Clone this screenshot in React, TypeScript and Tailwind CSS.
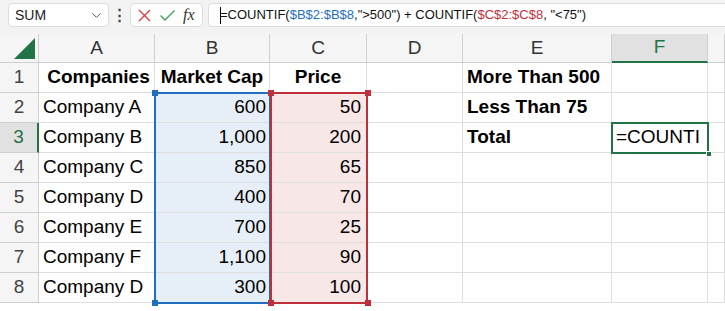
import { ChevronDown } from 'lucide-react';

const cols = ['A', 'B', 'C', 'D', 'E', 'F', ''];

type Row = { a: string; b: string; c: string; e: string; f?: string; bold?: boolean };

const rows: Row[] = [
  { a: 'Companies', b: 'Market Cap', c: 'Price', e: 'More Than 500', bold: true },
  { a: 'Company A', b: '600', c: '50', e: 'Less Than 75' },
  { a: 'Company B', b: '1,000', c: '200', e: 'Total', f: '=COUNTI' },
  { a: 'Company C', b: '850', c: '65', e: '' },
  { a: 'Company D', b: '400', c: '70', e: '' },
  { a: 'Company E', b: '700', c: '25', e: '' },
  { a: 'Company F', b: '1,100', c: '90', e: '' },
  { a: 'Company D', b: '300', c: '100', e: '' },
];

function FormulaBar() {
  return (
    <div className="flex h-[34px] items-start bg-[#f3f3f3] pt-[3px] pl-[8px]">
      <div className="flex h-[24px] w-[101px] items-center justify-between rounded-[4px] border border-[#dcdcdc] bg-white pl-[6px] pr-[4px] text-[14px] text-[#222]">
        <span>SUM</span>
        <ChevronDown size={15} strokeWidth={1.6} className="text-[#555]" />
      </div>
      <div className="flex h-[24px] w-[21px] items-center justify-center text-[15px] font-bold text-[#444]">⋮</div>
      <div className="flex h-[24px] w-[73px] items-center gap-[7px] rounded-[4px] border border-[#dcdcdc] bg-white pl-[6px]">
        <svg width="15" height="15" viewBox="0 0 15 15">
          <path d="M2 2 L13 13 M13 2 L2 13" stroke="#e23b3b" strokeWidth="1.4" fill="none" />
        </svg>
        <svg width="17" height="15" viewBox="0 0 17 15">
          <path d="M1.5 7.5 L6 12 L15.5 2.5" stroke="#3aa55a" strokeWidth="1.4" fill="none" />
        </svg>
        <span className="font-['Liberation_Serif',serif] text-[16px] italic text-[#333]">fx</span>
      </div>
      <div className="ml-[5px] flex h-[24px] flex-1 items-center rounded-l-[4px] border border-r-0 border-[#dcdcdc] bg-white pl-[11px] text-[13px] text-[#111]">
        <span className="mr-[-1px] inline-block h-[17px] w-px bg-black" />
        <span>=COUNTIF(</span>
        <span className="text-[#1f6ebf]">$B$2:$B$8</span>
        <span>,"&gt;500") + COUNTIF(</span>
        <span className="text-[#c0303a]">$C$2:$C$8</span>
        <span>, "&lt;75")</span>
      </div>
    </div>
  );
}

function Sheet() {
  return (
    <div className="relative">
      <div className="grid grid-cols-[39px_116px_115px_97px_96px_149px_96px_1fr] text-[19px] text-black">
        {/* corner */}
        <div className="relative h-[29px] border-r border-b border-[#cfcfcf] bg-[#f5f5f5]">
          <div className="absolute right-[3px] bottom-[3px] h-0 w-0 [border-bottom:21px_solid_#217346] [border-left:21px_solid_transparent]" />
        </div>
        {cols.map((c, i) =>
          c === 'F' ? (
            <div
              key={i}
              className="flex h-[29px] items-center justify-center border-r border-b-2 border-r-[#cfcfcf] border-b-[#217346] bg-[#e1e1e1] text-[#217346]"
            >
              {c}
            </div>
          ) : (
            <div
              key={i}
              className="flex h-[29px] items-center justify-center border-r border-b border-[#cfcfcf] bg-[#f5f5f5] text-[#333]"
            >
              {c}
            </div>
          )
        )}
        {rows.map((r, i) => (
          <SheetRow key={i} r={r} i={i} />
        ))}
      </div>

      {/* B2:B8 range */}
      <div className="pointer-events-none absolute left-[154px] top-[58px] h-[212px] w-[117px] border-2 border-[#1f6ebf]" />
      <div className="absolute left-[152px] top-[56px] h-[6px] w-[6px] bg-[#1f6ebf]" />
      <div className="absolute left-[152px] top-[266px] h-[6px] w-[6px] bg-[#1f6ebf]" />
      {/* C2:C8 range */}
      <div className="pointer-events-none absolute left-[270px] top-[58px] h-[212px] w-[98px] border-2 border-[#c0303a]" />
      <div className="absolute left-[268px] top-[56px] h-[6px] w-[6px] bg-[#c0303a]" />
      <div className="absolute left-[365px] top-[56px] h-[6px] w-[6px] bg-[#c0303a]" />
      <div className="absolute left-[268px] top-[266px] h-[6px] w-[6px] bg-[#c0303a]" />
      <div className="absolute left-[365px] top-[266px] h-[6px] w-[6px] bg-[#c0303a]" />
      {/* active cell F3 */}
      <div className="pointer-events-none absolute left-[611px] top-[88px] h-[32px] w-[98px] border-2 border-[#217346]" />
      <div className="absolute left-[706px] top-[117px] h-[6px] w-[6px] border border-white bg-[#217346]" />
    </div>
  );
}

function SheetRow({ r, i }: { r: Row; i: number }) {
  const n = i + 1;
  const selected = n === 3;
  const base = 'h-[30px] border-r border-b border-[#dedede] flex items-center';
  const w = r.bold ? 'font-bold' : '';
  const inRange = !r.bold;
  return (
    <>
      <div
        className={
          selected
            ? 'flex h-[30px] items-center justify-center border-r-2 border-b border-r-[#217346] border-b-[#cfcfcf] bg-[#e1e1e1] text-[#217346]'
            : 'flex h-[30px] items-center justify-center border-r border-b border-[#cfcfcf] bg-[#f5f5f5] text-[#444]'
        }
      >
        {n}
      </div>
      <div className={`${base} pl-[4px] ${w} ${r.bold ? 'justify-center' : ''}`}>{r.a}</div>
      <div className={`${base} ${w} ${r.bold ? 'justify-center' : 'justify-end pr-[3px]'} ${inRange ? 'bg-[#e6eff8]' : ''}`}>
        {r.b}
      </div>
      <div className={`${base} ${w} ${r.bold ? 'justify-center' : 'justify-end pr-[5px]'} ${inRange ? 'bg-[#f8e7e7]' : ''}`}>
        {r.c}
      </div>
      <div className={base} />
      <div className={`${base} pl-[4px] font-bold`}>{r.e}</div>
      <div className={`${base} pl-[4px]`}>{r.f ?? ''}</div>
      <div className={base} />
    </>
  );
}

export default function App() {
  return (
    <div className="h-[311px] w-[725px] overflow-hidden bg-white font-['Liberation_Sans',Arial,sans-serif]">
      <FormulaBar />
      <Sheet />
    </div>
  );
}
